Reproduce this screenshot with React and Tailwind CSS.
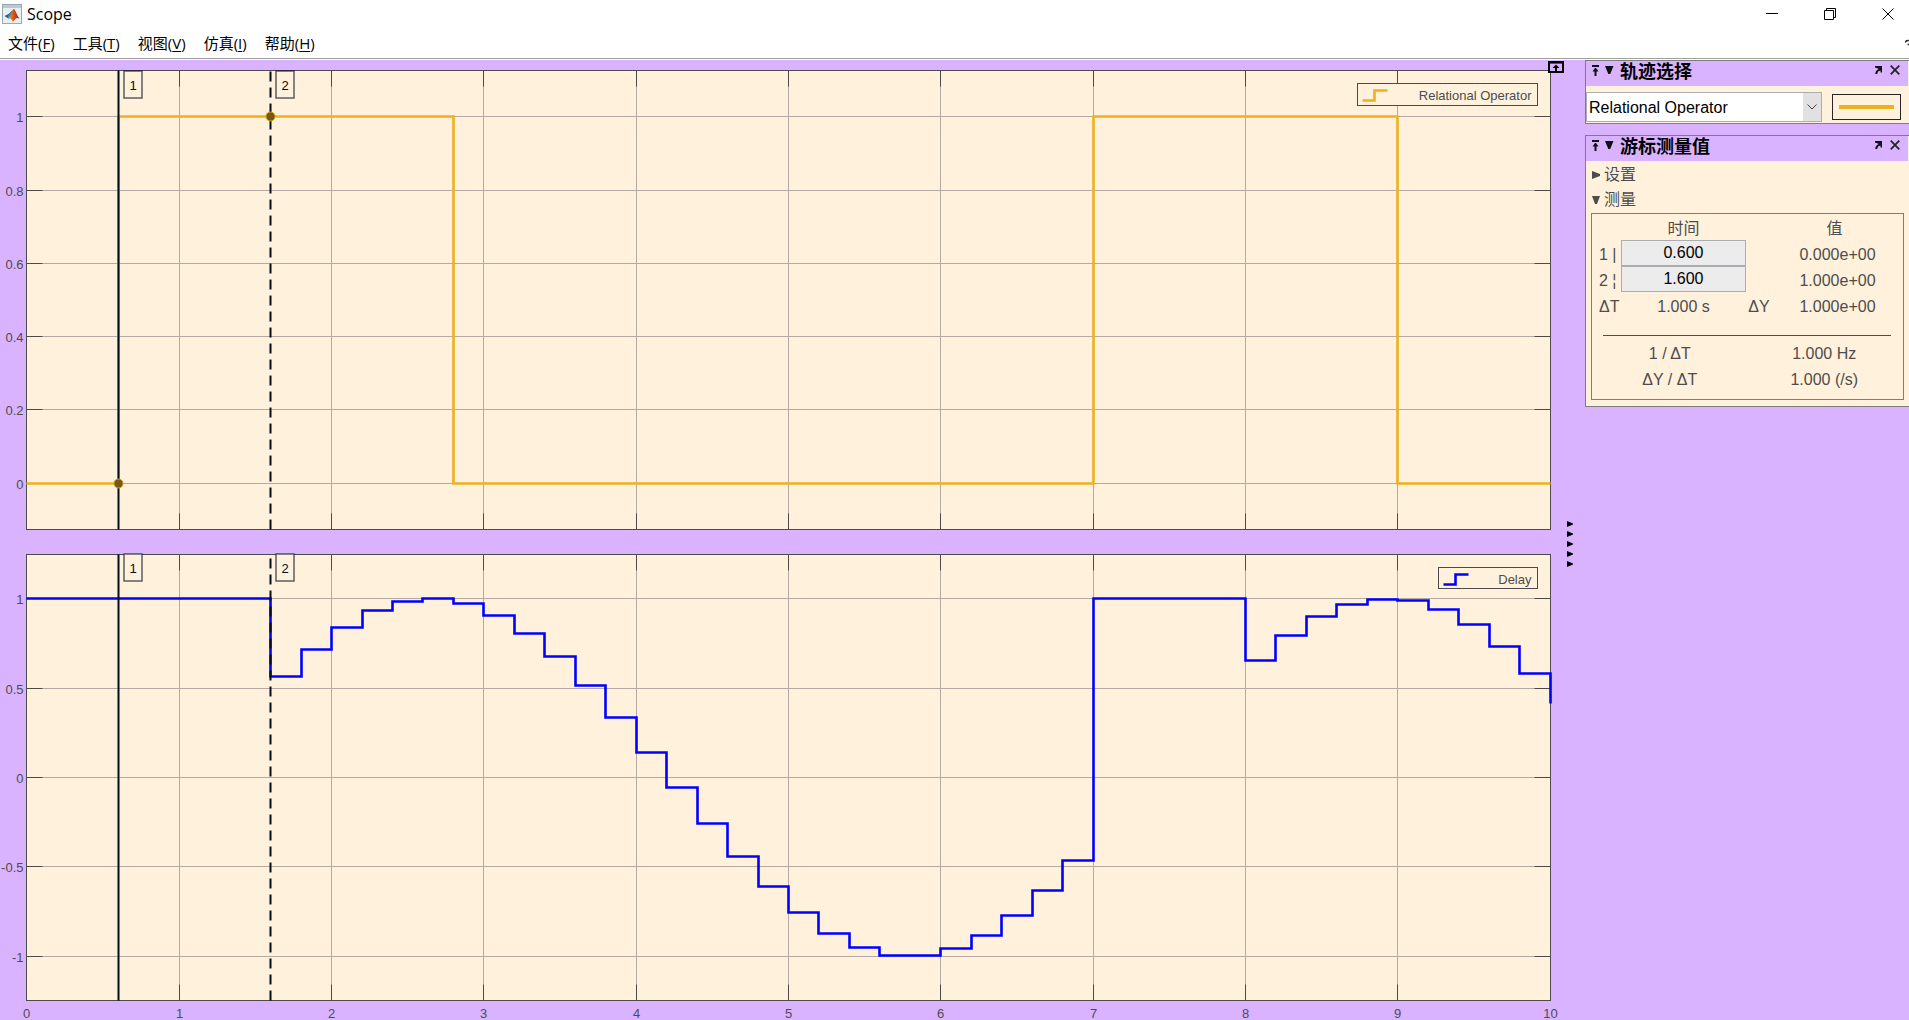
import React, { useEffect, useRef, useState } from 'react';

const SANS = 'font-["Liberation_Sans","Noto_Sans_CJK_SC",sans-serif]';
const UI_SANS = 'font-["Open_Sans","Noto_Sans_CJK_SC",sans-serif]';

const MENUS = [
    { label: '文件', key: 'F' },
    { label: '工具', key: 'T' },
    { label: '视图', key: 'V' },
    { label: '仿真', key: 'I' },
    { label: '帮助', key: 'H' },
];

const X_TICKS = [0, 1, 2, 3, 4, 5, 6, 7, 8, 9, 10];
const SAMPLE_TIME = 0.2;

// Axes limits sit just inside the frame line
const INSET = 0.4;

const relationalPoints = [
    [0, 0],
    [0.6, 1],
    [2.8, 0],
    [7, 1],
    [9, 0],
    [10, 0],
];

const buildDelayPoints = () => {
    const points = [];
    for (let i = 0; i <= 50; i++) {
        const t = i * SAMPLE_TIME;
        const held = i < 8 || (i >= 35 && i < 40);
        points.push([t, held ? 1 : Math.sin(t - 1)]);
    }
    return points;
};

const delayPoints = buildDelayPoints();

const useSize = () => {
    const ref = useRef(null);
    const [size, setSize] = useState({ width: 0, height: 0 });

    useEffect(() => {
        const update = () => {
            const box = ref.current.getBoundingClientRect();
            setSize({ width: box.width, height: box.height });
        };
        update();

        const observer = new ResizeObserver(update);
        observer.observe(ref.current);
        return () => observer.disconnect();
    }, []);

    return [ref, size];
};

const ScopePlot = ({ name, color, points, yTicks, yLimits, top, bottom, showTime, cursors, markers, legendWidth, legendTop }) => {
    const [ref, { width, height }] = useSize();

    const left = 26;
    const right = width - 17;
    const lower = height - bottom;

    // Snap to pixel centers so that thin lines stay crisp
    const px = (t) => Math.round(left + INSET + (t / 10) * (right - left - 2 * INSET)) + 0.5;
    const py = (v) =>
        Math.round(top + INSET + ((yLimits[1] - v) / (yLimits[1] - yLimits[0])) * (lower - top - 2 * INSET)) + 0.5;

    let trace = '';
    points.forEach(([t, v], i) => {
        trace += i === 0 ? `M${px(t)} ${py(v)}` : `H${px(t)}V${py(v)}`;
    });

    const x0 = px(0);
    const x1 = px(10);
    const y0 = top + 0.5;
    const y1 = lower + 0.5;
    const legendX = x1 - 13 - legendWidth;
    const legendY = y0 + legendTop;

    return (
        <div ref={ref} className="flex-1 min-h-0 overflow-hidden">
            {width > 0 && (
                <svg width={width} height={height} className={`block text-[13px] ${SANS}`} role="img" aria-label={name}>
                    <rect x={x0} y={y0} width={x1 - x0} height={y1 - y0} fill="#fff1dc" />

                    <g stroke="#b5aaa3">
                        {X_TICKS.slice(1, -1).map((t) => (
                            <line key={t} x1={px(t)} x2={px(t)} y1={y0} y2={y1} />
                        ))}
                        {yTicks.map((v) => (
                            <line key={v} x1={x0} x2={x1} y1={py(v)} y2={py(v)} />
                        ))}
                    </g>

                    <g stroke="#4d4a4a" fill="none">
                        {X_TICKS.slice(1, -1).map((t) => (
                            <path key={t} d={`M${px(t)} ${y0}v16M${px(t)} ${y1}v-16`} />
                        ))}
                        {yTicks.map((v) => (
                            <path key={v} d={`M${x0} ${py(v)}h16M${x1} ${py(v)}h-16`} />
                        ))}
                        <rect x={x0} y={y0} width={x1 - x0} height={y1 - y0} />
                    </g>

                    <path d={trace} fill="none" stroke={color} strokeWidth="2.6" />

                    {cursors.map((cursor) => (
                        <g key={cursor.id}>
                            <line
                                x1={px(cursor.time)}
                                x2={px(cursor.time)}
                                y1={y1}
                                y2={y0}
                                stroke="#00101f"
                                strokeWidth="2"
                                strokeDasharray={cursor.dashed ? '10 6' : undefined}
                            />
                            <rect
                                x={px(cursor.time) + 5.5}
                                y={showTime ? y0 - 0.5 : y0 + 0.5}
                                width="18"
                                height="27"
                                fill="#fff1dc"
                                stroke="#00101f"
                                strokeOpacity="0.65"
                                strokeWidth="1.5"
                            />
                            <text x={px(cursor.time) + 14.5} y={y0 + (showTime ? 18 : 19)} textAnchor="middle" fill="#00101f">
                                {cursor.id}
                            </text>
                        </g>
                    ))}

                    {markers.map(([t, v]) => (
                        <circle key={t} cx={px(t)} cy={py(v)} r="4.5" fill="#775810" stroke="#d29b18" />
                    ))}

                    <rect x={legendX} y={legendY} width={legendWidth} height={showTime ? 21 : 22} fill="#fff1dc" stroke="#4d4a4a" />
                    <path d={`M${legendX + 5} ${legendY + 17}h12v-10h13`} fill="none" stroke={color} strokeWidth="2.6" />
                    <text x={legendX + legendWidth - 6} y={legendY + 16.5} textAnchor="end" fill="#4d4d4d">
                        {name}
                    </text>

                    <g fill="#4d4d4d">
                        {yTicks.map((v) => (
                            <text key={v} x={x0 - 3} y={py(v) + 5.5} textAnchor="end">
                                {v}
                            </text>
                        ))}
                        {showTime &&
                            X_TICKS.map((t) => (
                                <text key={t} x={px(t)} y={y1 + 17} textAnchor="middle">
                                    {t}
                                </text>
                            ))}
                    </g>
                </svg>
            )}
        </div>
    );
};

const MatlabIcon = () => (
    <svg width="20" height="20" viewBox="0 0 20 20" aria-hidden="true">
        <defs>
            <linearGradient id="flame" x1="0" x2="1">
                <stop offset="0" stopColor="#f0a030" />
                <stop offset="0.4" stopColor="#e2601c" />
                <stop offset="1" stopColor="#8c1c10" />
            </linearGradient>
        </defs>
        <rect x="0.5" y="0.5" width="19" height="19" fill="#e9eef2" stroke="#9aa8b4" />
        <rect x="1" y="1" width="18" height="3" fill="#b9c9d8" />
        <path d="M2.500 12 7 9.800l3-3 1 1-3.500 6-2 .2z" fill="#1d5f9c" />
        <path d="M7 9.800 10.500 6.500l.8-1.200L9 13.500l-2 1.200-1.500-.6z" fill="#2d8abf" />
        <path d="M6 14C9 12.500 9.800 6 11.700 5c1.800 0 3 6.500 6 10-2.200-1.500-3.500-1.200-4.700.5-.8 1.200-1.500 1.800-2.500 1.800-.5-2-2-3.500-4.500-3.300z" fill="url(#flame)" />
    </svg>
);

const TitleBar = () => (
    <header className={`flex h-7 shrink-0 items-center pl-0.5 text-black ${UI_SANS}`}>
        <MatlabIcon />
        <h1 className="ml-[5px] flex-1 text-base leading-6">Scope</h1>

        {/* The last button reaches past the window edge when maximized */}
        <div className="mr-[-8px] flex">
            <button type="button" aria-label="Minimize" className="flex h-7 w-[58px] items-center justify-center">
                <svg width="12" height="12" viewBox="0 0 12 12" stroke="#000" fill="none">
                    <path d="M0 5.500h12" />
                </svg>
            </button>
            <button type="button" aria-label="Restore" className="flex h-7 w-[58px] items-center justify-center">
                <svg width="12" height="12" viewBox="0 0 12 12" stroke="#000" fill="none">
                    <path d="M.5 2.500h9v9h-9zM2.500 2.500v-2h9v9h-2" />
                </svg>
            </button>
            <button type="button" aria-label="Close" className="flex h-7 w-[58px] items-center justify-center">
                <svg width="12" height="12" viewBox="0 0 12 12" stroke="#000" fill="none">
                    <path d="m.5.5 11 11m0-11-11 11" />
                </svg>
            </button>
        </div>
    </header>
);

const MenuBar = () => (
    <nav className={`flex h-[31px] shrink-0 items-center gap-[18px] border-b border-[#a0a0a0] pl-2 text-[15px] leading-5 text-black ${UI_SANS}`}>
        {MENUS.map((menu) => (
            <button key={menu.key} type="button" className="whitespace-nowrap pb-px">
                {menu.label}(<u className="underline-offset-2">{menu.key}</u>)
            </button>
        ))}
        <svg width="4" height="8" viewBox="0 0 4 8" className="ml-auto" fill="none" stroke="#333" strokeWidth="1.500">
            <path d="M0 3.500C1 1.500 2 1.200 4 1.500M2.500 5.500H4" />
        </svg>
    </nav>
);

const Panel = ({ title, children }) => (
    <section className="border-y border-l border-[#7d7d7d] bg-[#fff1dc]">
        <div className="mr-px flex h-[25px] items-start bg-[#d9b3ff]">
            <button type="button" aria-label="Pin" className="ml-1.5 mt-1">
                <svg width="8" height="12" viewBox="0 0 8 12">
                    <path d="M0 0h7v2H0zM3 3h1l2.500 3.500H4.500V11h-2V6.500h-2z" fill="#111" />
                </svg>
            </button>
            <button type="button" aria-label="Collapse" className="ml-[5px] mt-[5px]">
                <svg width="9" height="9" viewBox="0 0 9 9">
                    <path d="M0 0h8.500L5.200 8H3.300z" fill="#111" />
                </svg>
            </button>
            <h2 className="ml-1.5 flex-1 text-lg font-bold leading-[23px] text-black">{title}</h2>
            <button type="button" aria-label="Undock" className="mt-[5px]">
                <svg width="8" height="9" viewBox="0 0 8 9">
                    <path d="M0 0h7v6.500H5.500V4.500L3 5.500 2.200 8H.3C.3 5.500 1.500 4 4 3L0 1.500z" fill="#111" />
                </svg>
            </button>
            <button type="button" aria-label="Close panel" className="ml-[7px] mr-2 mt-1">
                <svg width="10" height="10" viewBox="0 0 10 10" stroke="#222" strokeWidth="1.700">
                    <path d="m.7.7 8.600 8.600m0-8.600L.7 9.300" />
                </svg>
            </button>
        </div>
        {children}
    </section>
);

const SectionToggle = ({ open, children }) => (
    <button type="button" aria-expanded={open} className="flex h-[25px] items-center gap-1 pl-1.5">
        <svg width="8" height="8" viewBox="0 0 8 8" fill="#4d4d4d">
            <path d={open ? 'M0 0h8L5 8H3z' : 'M0 0l8 3v2L0 8z'} />
        </svg>
        {children}
    </button>
);

const TracePanel = () => (
    <Panel title="轨迹选择">
        <div className="flex items-center pb-px pt-[6px]">
            <div className="relative flex-1">
                <select
                    aria-label="轨迹选择"
                    defaultValue="relational"
                    className="block h-[30px] w-full appearance-none border border-[#abadb3] bg-white pl-[2px] pr-5 pt-[2px] text-base leading-6 text-black outline-none"
                >
                    <option value="relational">Relational Operator</option>
                    <option value="delay">Delay</option>
                </select>
                <span className="pointer-events-none absolute inset-y-px right-px flex w-[18px] items-center justify-center bg-[#e1e1e1]">
                    <svg width="10" height="6" viewBox="0 0 10 6" fill="none" stroke="#444">
                        <path d="m.5.5 4.500 4.500L9.500.5" />
                    </svg>
                </span>
            </div>
            <button type="button" aria-label="Line style" className="ml-2.5 mr-2 flex h-[26px] w-[69px] items-center justify-center border border-[#262626]">
                <span className="h-1 w-[55px] bg-[#edb120]" />
            </button>
        </div>
    </Panel>
);

const CursorPanel = () => {
    const [first, setFirst] = useState('0.600');
    const [second, setSecond] = useState('1.600');

    const inputClass = 'block h-[26px] w-full border border-[#abadb3] bg-[#ececec] text-center text-base text-black outline-none';
    const cellClass = 'p-0 pt-1';
    const labelClass = 'p-0 pl-[7px] pt-1 text-left';

    return (
        <Panel title="游标测量值">
            <div className="pb-1.5 text-base text-[#4d4d4d]">
                <div className="flex flex-col items-start pt-px">
                    <SectionToggle open={false}>设置</SectionToggle>
                    <SectionToggle open>测量</SectionToggle>
                </div>

                <div className="mx-[5px] mt-px border border-[#7d7d7d] pb-1.5 leading-[22px]">
                    <table className="w-full table-fixed">
                        <colgroup>
                            <col className="w-[29px]" />
                            <col className="w-[125px]" />
                            <col className="w-[26px]" />
                            <col />
                        </colgroup>
                        <thead>
                            <tr className="h-[26px]">
                                <th className="p-0" />
                                <th className="p-0 pt-1 font-normal">时间</th>
                                <th className="p-0" />
                                <th className="p-0 pr-1.5 pt-1 font-normal">值</th>
                            </tr>
                        </thead>
                        <tbody className="whitespace-nowrap text-center">
                            <tr className="h-[26px]">
                                <td className={labelClass}>
                                    <label htmlFor="cursor-1">1 |</label>
                                </td>
                                <td className="p-0">
                                    <input id="cursor-1" type="text" className={inputClass} value={first} onChange={(e) => setFirst(e.target.value)} />
                                </td>
                                <td className="p-0" />
                                <td className={cellClass}>0.000e+00</td>
                            </tr>
                            <tr className="h-[26px]">
                                <td className={labelClass}>
                                    <label htmlFor="cursor-2">2 ¦</label>
                                </td>
                                <td className="p-0">
                                    <input id="cursor-2" type="text" className={inputClass} value={second} onChange={(e) => setSecond(e.target.value)} />
                                </td>
                                <td className="p-0" />
                                <td className={cellClass}>1.000e+00</td>
                            </tr>
                            <tr className="h-[26px]">
                                <td className={labelClass}>ΔT</td>
                                <td className={cellClass}>1.000 s</td>
                                <td className={cellClass}>ΔY</td>
                                <td className={cellClass}>1.000e+00</td>
                            </tr>
                        </tbody>
                    </table>

                    <hr className="mb-[5px] ml-[11px] mr-3 mt-[17px] h-px border-0 bg-[#4d4d4d]" />

                    <table className="w-full table-fixed text-center">
                        <tbody>
                            <tr className="h-[26px]">
                                <td className="p-0">1 / ΔT</td>
                                <td className="p-0 pr-[2px]">1.000 Hz</td>
                            </tr>
                            <tr className="h-[26px]">
                                <td className="p-0">ΔY / ΔT</td>
                                <td className="p-0 pr-[2px]">1.000 (/s)</td>
                            </tr>
                        </tbody>
                    </table>
                </div>
            </div>
        </Panel>
    );
};

const App = () => {
    const cursors = [
        { id: 1, time: 0.6, dashed: false },
        { id: 2, time: 1.6, dashed: true },
    ];

    return (
        <div className="flex h-screen flex-col overflow-hidden bg-white">
            <TitleBar />
            <MenuBar />

            <main className={`mt-px flex min-h-0 flex-1 bg-[#d9b3ff] ${SANS}`}>
                <div className="relative flex min-w-0 flex-1 flex-col">
                    <ScopePlot
                        name="Relational Operator"
                        color="#edb120"
                        points={relationalPoints}
                        yTicks={[0, 0.2, 0.4, 0.6, 0.8, 1]}
                        yLimits={[-0.125, 1.125]}
                        top={10}
                        bottom={11}
                        cursors={cursors}
                        markers={[[0.6, 0], [1.6, 1]]}
                        legendWidth={180}
                        legendTop={13}
                    />
                    <ScopePlot
                        name="Delay"
                        color="#0000ff"
                        points={delayPoints}
                        yTicks={[-1, -0.5, 0, 0.5, 1]}
                        yLimits={[-1.246, 1.246]}
                        top={14}
                        bottom={20}
                        showTime
                        cursors={cursors}
                        markers={[]}
                        legendWidth={99}
                        legendTop={13}
                    />
                    <button type="button" aria-label="Maximize axes" className="absolute right-[3px] top-px">
                        <svg width="16" height="12" viewBox="0 0 16 12">
                            <rect x="1" y="1" width="14" height="10" fill="#d9b3ff" stroke="#000" strokeWidth="2" />
                            <path d="M2 2h12v1H2z" fill="#5c4a70" />
                            <path d="M8 3.500 11.500 7H9v3H7V7H4.500z" fill="#000" />
                        </svg>
                    </button>
                </div>

                {/* Splitter handle */}
                <div className="flex w-[18px] flex-col items-start justify-center gap-1 pt-2">
                    {[0, 1, 2, 3, 4].map((i) => (
                        <svg key={i} width="6" height="6" viewBox="0 0 6 6">
                            <path d="M0 0l6 2.500v1L0 6z" fill="#000" />
                        </svg>
                    ))}
                </div>

                <aside className="flex w-[324px] shrink-0 flex-col gap-[11px]">
                    <TracePanel />
                    <CursorPanel />
                </aside>
            </main>
        </div>
    );
};

export default App;
